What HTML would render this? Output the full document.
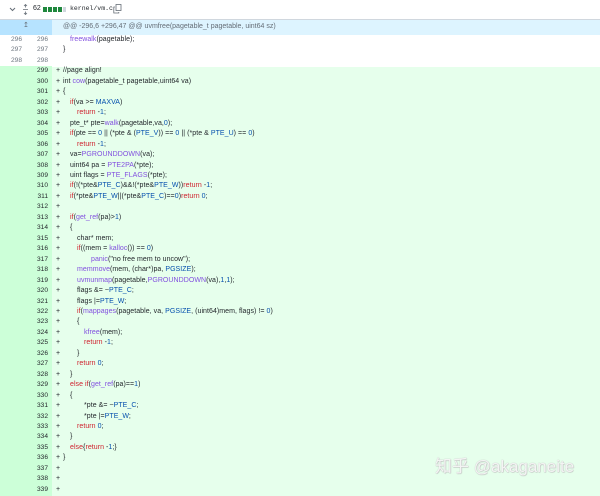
<!DOCTYPE html>
<html><head><meta charset="utf-8"><style>
*{margin:0;padding:0;box-sizing:border-box}
body{width:600px;height:492px;overflow:hidden;background:#e6ffec;font-family:"Liberation Sans",sans-serif;position:relative}
.hdr{position:absolute;left:0;top:0;width:600px;height:20px;background:#fff;border-bottom:1px solid #d0d7de;font-size:7px;color:#1f2328}
.hunk{position:absolute;left:0;top:20px;width:600px;height:15px;background:#ddf4ff}
.hunk .g{position:absolute;left:0;top:0;width:52px;height:15px;background:#b6e3ff}
.row{position:absolute;left:0;width:600px;height:11px;font-size:7px;line-height:10.46px;color:#1f2328;white-space:pre}
.row.ctx{background:#fff}
.n{position:absolute;top:0;width:22px;text-align:right;color:#6e7781;font-size:6.6px}
.n1{left:0}.n2{left:26px}
.add .gut{position:absolute;left:0;top:0;width:52px;height:100%;background:#ccffd8}
.add .n{color:#1f2328}
.p{position:absolute;left:56px}
.c{position:absolute;left:63px;letter-spacing:0.05px}
.k{color:#cf222e}.f{color:#8250df}.b{color:#0550ae}
.wm{position:absolute;left:435px;top:452px;font-size:17px;color:#f4f4f4;text-shadow:0 0 1px #bbb,0.5px 0.5px 1px #bbb;font-family:"Liberation Sans","Noto Sans CJK SC",sans-serif}
</style></head><body>
<div class="hdr">
<svg style="position:absolute;left:9px;top:7px" width="7" height="5"><path d="M1 1 L3.5 3.5 L6 1" stroke="#656d76" fill="none" stroke-width="1"/></svg>
<svg style="position:absolute;left:22px;top:4px" width="7" height="11"><path d="M3.5 0.5v3M2 2l1.5-1.5L5 2M1 5.5h5M3.5 7.5v3M2 9l1.5 1.5L5 9" stroke="#656d76" fill="none" stroke-width="0.8"/></svg>
<span style="position:absolute;left:33px;top:5px">62</span>
<span style="position:absolute;left:43px;top:7px;width:19px;height:5px;background:repeating-linear-gradient(90deg,#1f883d 0 4px,transparent 4px 5px)"></span>
<span style="position:absolute;left:63px;top:7px;width:3px;height:5px;background:#d0d7de"></span>
<span style="position:absolute;left:70px;top:5px;font-family:'Liberation Mono',monospace;font-size:6.5px">kernel/vm.c</span>
<svg style="position:absolute;left:113px;top:4px" width="9" height="10"><rect x="3" y="0.5" width="5" height="6" fill="none" stroke="#656d76" stroke-width="0.8"/><path d="M2 3H0.8v6h5V8" stroke="#656d76" fill="none" stroke-width="0.8"/></svg>
</div>
<div class="hunk"><div class="g"></div>
<span style="position:absolute;left:23px;top:1px;font-size:7px;color:#656d76">↥</span>
<span style="position:absolute;left:63px;top:3px;font-size:7px;color:#656d76">@@ -296,6 +296,47 @@ uvmfree(pagetable_t pagetable, uint64 sz)</span>
</div>
<div id="rows"></div>
<script>
var ctx=[[296,"  <span class=f>freewalk</span>(pagetable);"],[297,"}"],[298,""]];
var add=[
"//page align!",
"int <span class=f>cow</span>(pagetable_t pagetable,uint64 va)",
"{",
"  <span class=k>if</span>(va >= <span class=b>MAXVA</span>)",
"    <span class=k>return</span> -<span class=b>1</span>;",
"  pte_t* pte=<span class=f>walk</span>(pagetable,va,<span class=b>0</span>);",
"  <span class=k>if</span>(pte == <span class=b>0</span> || (*pte &amp; (<span class=b>PTE_V</span>)) == <span class=b>0</span> || (*pte &amp; <span class=b>PTE_U</span>) == <span class=b>0</span>)",
"    <span class=k>return</span> -<span class=b>1</span>;",
"  va=<span class=f>PGROUNDDOWN</span>(va);",
"  uint64 pa = <span class=f>PTE2PA</span>(*pte);",
"  uint flags = <span class=f>PTE_FLAGS</span>(*pte);",
"  <span class=k>if</span>(!(*pte&amp;<span class=b>PTE_C</span>)&amp;&amp;!(*pte&amp;<span class=b>PTE_W</span>))<span class=k>return</span> -<span class=b>1</span>;",
"  <span class=k>if</span>(*pte&amp;<span class=b>PTE_W</span>||(*pte&amp;<span class=b>PTE_C</span>)==<span class=b>0</span>)<span class=k>return</span> <span class=b>0</span>;",
"",
"  <span class=k>if</span>(<span class=f>get_ref</span>(pa)><span class=b>1</span>)",
"  {",
"    char* mem;",
"    <span class=k>if</span>((mem = <span class=f>kalloc</span>()) == <span class=b>0</span>)",
"        <span class=f>panic</span>(\"no free mem to uncow\");",
"    <span class=f>memmove</span>(mem, (char*)pa, <span class=b>PGSIZE</span>);",
"    <span class=f>uvmunmap</span>(pagetable,<span class=f>PGROUNDDOWN</span>(va),<span class=b>1</span>,<span class=b>1</span>);",
"    flags &amp;= ~<span class=b>PTE_C</span>;",
"    flags |=<span class=b>PTE_W</span>;",
"    <span class=k>if</span>(<span class=f>mappages</span>(pagetable, va, <span class=b>PGSIZE</span>, (uint64)mem, flags) != <span class=b>0</span>)",
"    {",
"      <span class=f>kfree</span>(mem);",
"      <span class=k>return</span> -<span class=b>1</span>;",
"    }",
"    <span class=k>return</span> <span class=b>0</span>;",
"  }",
"  <span class=k>else if</span>(<span class=f>get_ref</span>(pa)==<span class=b>1</span>)",
"  {",
"      *pte &amp;= ~<span class=b>PTE_C</span>;",
"      *pte |=<span class=b>PTE_W</span>;",
"    <span class=k>return</span> <span class=b>0</span>;",
"  }",
"  <span class=k>else</span>{<span class=k>return</span> -<span class=b>1</span>;}",
"}","","",""];
function ind(s){var m=s.match(/^ */)[0].length;return [m*3.5,s.slice(m)];}
var h="",y=35,H=10.46;
ctx.forEach(function(r){var a=ind(r[1]);h+='<div class="row ctx" style="top:'+y.toFixed(2)+'px"><span class="n n1">'+r[0]+'</span><span class="n n2">'+r[0]+'</span><span class="c" style="margin-left:'+a[0]+'px">'+a[1]+'</span></div>';y+=H;});
add.forEach(function(s,i){var a=ind(s);h+='<div class="row add" style="top:'+y.toFixed(2)+'px"><div class="gut"></div><span class="n n2">'+(299+i)+'</span><span class="p">+</span><span class="c" style="margin-left:'+a[0]+'px">'+a[1]+'</span></div>';y+=H;});
document.getElementById("rows").innerHTML=h;
</script>
<div class="wm">知乎 @akaganeite</div>
</body></html>
